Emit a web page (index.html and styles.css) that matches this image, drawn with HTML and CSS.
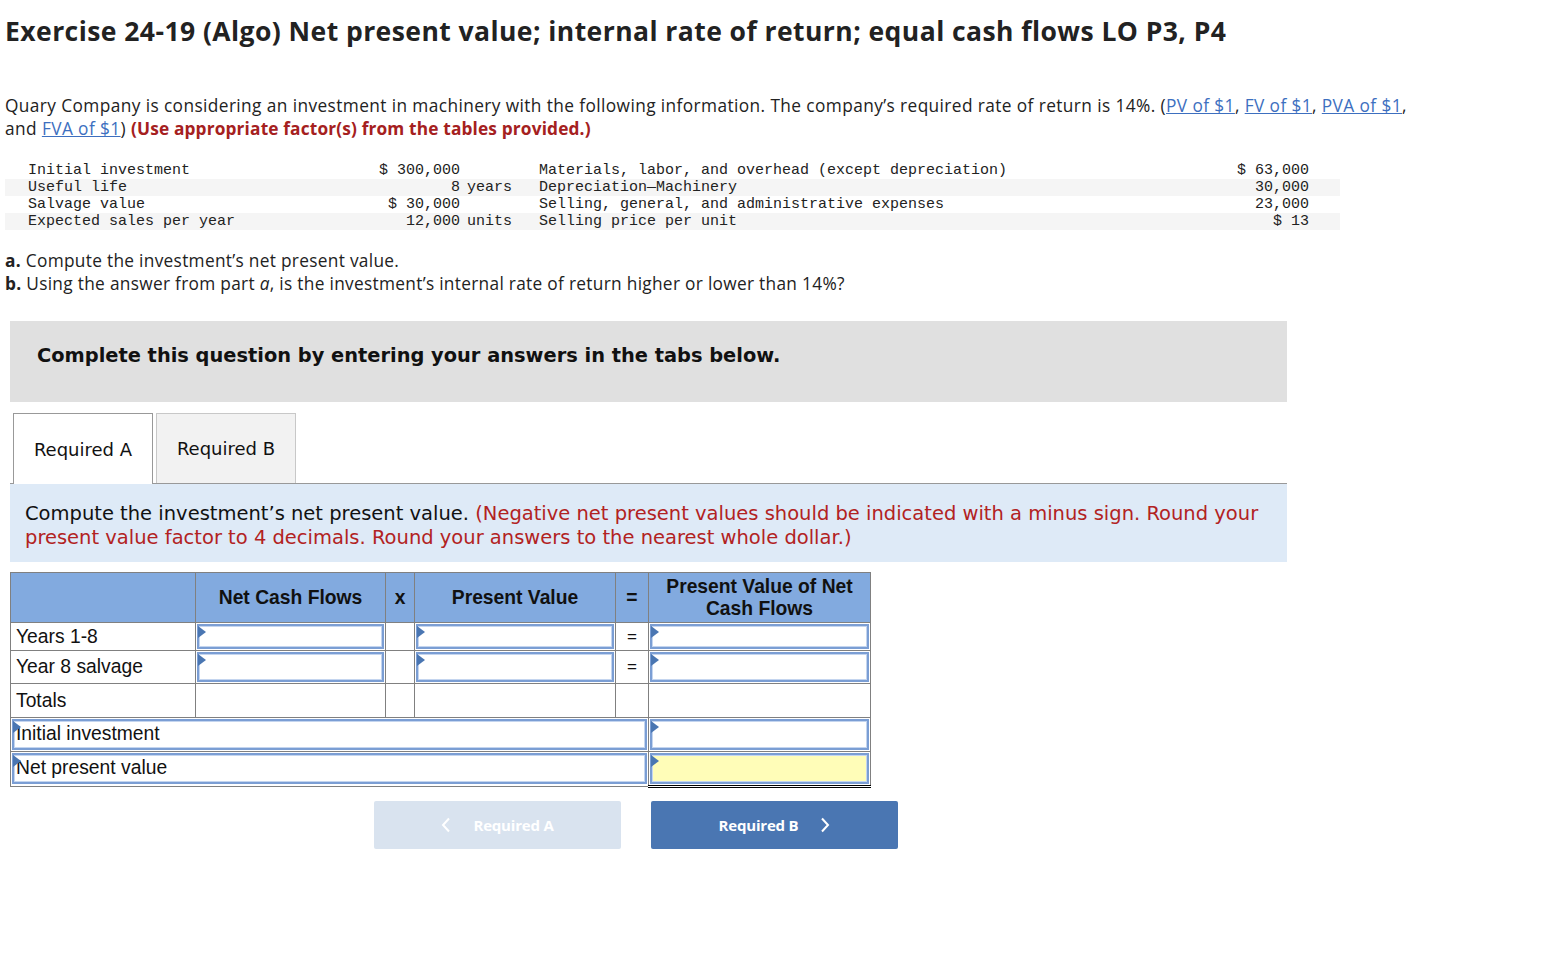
FILE: index.html
```html
<!DOCTYPE html>
<html>
<head>
<meta charset="utf-8">
<link rel="stylesheet" href="styles.css">
</head>
<body>
<div class="page">
  <h1 class="title">Exercise 24-19 (Algo) Net present value; internal rate of return; equal cash flows LO P3, P4</h1>

  <p class="intro">Quary Company is considering an investment in machinery with the following information. The company’s required rate of return is 14%. (<a href="#">PV of $1</a>, <a href="#">FV of $1</a>, <a href="#">PVA of $1</a>, and <a href="#">FVA of $1</a>) <strong class="red">(Use appropriate factor(s) from the tables provided.)</strong></p>

  <table class="data">
    <tr>
      <td class="d-lab">Initial investment</td>
      <td class="d-val">$ 300,000</td>
      <td class="d-unit"></td>
      <td class="d-lab2">Materials, labor, and overhead (except depreciation)</td>
      <td class="d-val2">$ 63,000</td>
      <td class="d-end"></td>
    </tr>
    <tr class="alt">
      <td class="d-lab">Useful life</td>
      <td class="d-val">8</td>
      <td class="d-unit">years</td>
      <td class="d-lab2">Depreciation—Machinery</td>
      <td class="d-val2">30,000</td>
      <td class="d-end"></td>
    </tr>
    <tr>
      <td class="d-lab">Salvage value</td>
      <td class="d-val">$ 30,000</td>
      <td class="d-unit"></td>
      <td class="d-lab2">Selling, general, and administrative expenses</td>
      <td class="d-val2">23,000</td>
      <td class="d-end"></td>
    </tr>
    <tr class="alt">
      <td class="d-lab">Expected sales per year</td>
      <td class="d-val">12,000</td>
      <td class="d-unit">units</td>
      <td class="d-lab2">Selling price per unit</td>
      <td class="d-val2">$ 13</td>
      <td class="d-end"></td>
    </tr>
  </table>

  <div class="parts">
    <div><b>a.</b> Compute the investment’s net present value.</div>
    <div><b>b.</b> Using the answer from part <i>a</i>, is the investment’s internal rate of return higher or lower than 14%?</div>
  </div>

  <div class="complete">Complete this question by entering your answers in the tabs below.</div>

  <div class="tabs">
    <div class="tab active">Required A</div>
    <div class="tab">Required B</div>
  </div>

  <div class="instr">Compute the investment’s net present value. <span class="red">(Negative net present values should be indicated with a minus sign. Round your present value factor to 4 decimals. Round your answers to the nearest whole dollar.)</span></div>

  <table class="npv">
    <colgroup>
      <col class="c1"><col class="c2"><col class="c3"><col class="c4"><col class="c5"><col class="c6">
    </colgroup>
    <tr class="hdr">
      <th></th>
      <th>Net Cash Flows</th>
      <th>x</th>
      <th>Present Value</th>
      <th>=</th>
      <th>Present Value of Net<br>Cash Flows</th>
    </tr>
    <tr class="r1">
      <td class="lab">Years 1-8</td>
      <td class="inp"><div class="box"></div></td>
      <td></td>
      <td class="inp"><div class="box"></div></td>
      <td class="eq">=</td>
      <td class="inp"><div class="box"></div></td>
    </tr>
    <tr class="r2">
      <td class="lab">Year 8 salvage</td>
      <td class="inp"><div class="box"></div></td>
      <td></td>
      <td class="inp"><div class="box"></div></td>
      <td class="eq">=</td>
      <td class="inp"><div class="box"></div></td>
    </tr>
    <tr class="r3">
      <td class="lab">Totals</td>
      <td></td>
      <td></td>
      <td></td>
      <td></td>
      <td class="tot"></td>
    </tr>
    <tr class="r4">
      <td colspan="5" class="inp"><div class="box wide">Initial investment</div></td>
      <td class="inp"><div class="box"></div></td>
    </tr>
    <tr class="r5">
      <td colspan="5" class="inp"><div class="box wide">Net present value</div></td>
      <td class="inp last"><div class="box yellow"></div></td>
    </tr>
  </table>

  <div class="nav">
    <button class="btn prev"><svg class="chev" width="10" height="16" viewBox="0 0 10 16"><path d="M8 1.5 L2 8 L8 14.5" fill="none" stroke="#fff" stroke-width="2"/></svg><span>Required A</span></button>
    <button class="btn next"><span>Required B</span><svg class="chev" width="10" height="16" viewBox="0 0 10 16"><path d="M2 1.5 L8 8 L2 14.5" fill="none" stroke="#fff" stroke-width="2"/></svg></button>
  </div>
</div>
</body>
</html>
```

FILE: styles.css
```css
html, body {
  margin: 0;
  padding: 0;
  background: #fff;
}
.page {
  padding: 0 5px;
  font-family: "Open Sans", Lato, sans-serif;
  color: #222;
}
.title {
  margin: 0;
  padding-top: 14px;
  font-size: 26.5px;
  letter-spacing: 0.44px;
  line-height: 34px;
  font-weight: 700;
  color: #222;
}
.intro {
  margin: 46px 0 0 0;
  max-width: 1420px;
  font-size: 17.3px;
  letter-spacing: 0.4px;
  line-height: 23px;
}
.intro a {
  color: #3d6fbf;
  text-decoration: underline;
}
.red {
  color: #a52020;
}
.intro .red {
  font-weight: 700;
  letter-spacing: 0.15px;
}
.data {
  margin-top: 22px;
  border-collapse: collapse;
  font-family: "Liberation Mono", monospace;
  font-size: 15px;
  color: #222;
  width: 1335px;
}
.data td {
  padding: 0;
  height: 17px;
  line-height: 17px;
  white-space: nowrap;
}
.data tr.alt {
  background: #f5f5f5;
}
.d-lab { padding-left: 23px !important; width: 349px; }
.d-val { text-align: right; width: 83px; }
.d-unit { padding-left: 7px !important; width: 72px; }
.d-val2 { text-align: right; width: 100px; }
.d-end { width: 31px; }

.parts {
  margin-top: 19px;
  font-size: 17.3px;
  letter-spacing: 0.3px;
  line-height: 23px;
}
.complete {
  margin: 26px 0 0 5px;
  width: 1277px;
  height: 81px;
  box-sizing: border-box;
  background: #e0e0e0;
  padding: 23px 27px 21px;
  font-family: Verdana, "DejaVu Sans", sans-serif;
  font-weight: 700;
  font-size: 19.4px;
  line-height: 24px;
  color: #111;
}
.tabs {
  margin: 11px 0 0 5px;
  width: 1277px;
  display: flex;
  gap: 3px;
  padding-left: 3px;
  box-sizing: border-box;
  border-bottom: 1px solid #999;
  height: 71px;
}
.tab {
  width: 140px;
  height: 70px;
  box-sizing: border-box;
  border: 1px solid #c8c8c8;
  border-bottom: none;
  background: #f2f2f2;
  display: flex;
  align-items: center;
  justify-content: center;
  font-family: Verdana, "DejaVu Sans", sans-serif;
  font-size: 18px;
  color: #111;
}
.tab.active {
  background: #fff;
  border-color: #999;
  height: 71px;
  position: relative;
  z-index: 1;
}
.instr {
  margin: 0 0 0 5px;
  width: 1277px;
  box-sizing: border-box;
  background: #deeaf7;
  padding: 18px 15px 12px 15px;
  font-family: Verdana, "DejaVu Sans", sans-serif;
  font-size: 19.5px;
  line-height: 24px;
  color: #111;
}
.instr .red {
  color: #b22222;
}

.npv {
  margin: 10px 0 0 5px;
  border-collapse: collapse;
  font-family: Arial, "Liberation Sans", sans-serif;
  font-size: 19.3px;
  color: #111;
  table-layout: fixed;
  width: 860px;
}
.c1 { width: 185px; }
.c2 { width: 190px; }
.c3 { width: 29px; }
.c4 { width: 201px; }
.c5 { width: 33px; }
.c6 { width: 222px; }
.npv th, .npv td {
  border: 1px solid #808080;
  padding: 0;
}
.npv th {
  background: #82aadf;
  height: 49px;
  font-weight: 700;
  line-height: 22px;
  text-align: center;
}
.npv td.lab {
  padding-left: 5px;
  text-align: left;
}
.npv .r1 td.lab { line-height: 24px; }
.npv .r3 td { height: 33px; }
.npv td.eq {
  text-align: center;
  font-size: 17px;
}
.npv td.inp {
  padding: 1px;
  vertical-align: top;
}
.npv td.tot {
  border-top: 1px solid #000;
}
.npv td.last {
  border-bottom: 3px double #000;
}
.box {
  position: relative;
  box-sizing: border-box;
  border: 2px solid #7b9ed4;
  box-shadow: inset 0 0 0 1px #c4d5ef;
  background: #fff;
}
.r1 .box { height: 25px; }
.r2 .box { height: 30px; }
.r4 .box, .r5 .box { height: 31px; }
.box::before {
  content: "";
  position: absolute;
  left: -1px;
  top: 0px;
  border-left: 8px solid #4a76b2;
  border-top: 6px solid transparent;
  border-bottom: 6px solid transparent;
}
.box.wide {
  padding-left: 2px;
  line-height: 26px;
  text-align: left;
}
.box.yellow {
  background: #fffdb8;
}
.nav {
  margin: 13px 0 0 369px;
  display: flex;
  gap: 30px;
}
.btn {
  width: 247px;
  height: 48px;
  border: none;
  border-radius: 2px;
  color: #fff;
  font-family: "Open Sans", Lato, sans-serif;
  font-weight: 700;
  font-size: 15px;
  letter-spacing: -0.2px;
  display: flex;
  align-items: center;
  justify-content: center;
  gap: 22px;
  padding: 0;
}
.btn.prev {
  background: #d9e3ef;
}
.btn.next {
  background: #4a76b2;
}
.chev {
  display: block;
}
```
